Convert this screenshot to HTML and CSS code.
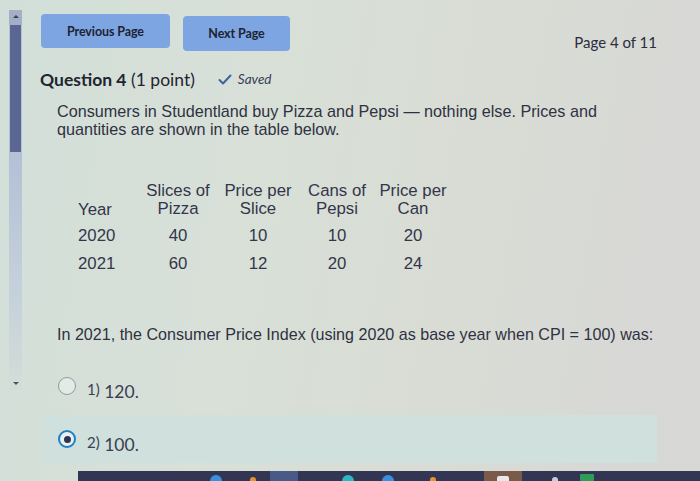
FILE: index.html
```html
<!DOCTYPE html>
<html lang="en">
<head>
<meta charset="utf-8">
<title>Quiz - Question 4</title>
<link rel="stylesheet" href="styles.css">
</head>
<body>
<div class="screen">
  <div class="workspace">
    <div class="scrollbar">
      <div class="sb-up"><span class="tri-up"></span></div>
      <div class="sb-thumb"></div>
      <div class="sb-track"></div>
      <div class="sb-down"><span class="tri-down"></span></div>
    </div>
    <main class="content">
      <div class="topbar">
        <div class="nav">
          <button class="btn">Previous Page</button>
          <button class="btn btn-next">Next Page</button>
        </div>
        <div class="pager">Page 4 of 11</div>
      </div>

      <h2 class="qtitle"><strong>Question 4</strong> <span class="pts">(1 point)</span><span class="saved"><svg class="check" viewBox="0 0 14 11" width="14" height="11"><path d="M1.5 6 L5 9.5 L12.5 1.5" fill="none" stroke="#3d63a0" stroke-width="2" stroke-linecap="round" stroke-linejoin="round"/></svg><em>Saved</em></span></h2>

      <div class="qbody">
        <p class="intro">Consumers in Studentland buy Pizza and Pepsi — nothing else. Prices and quantities are shown in the table below.</p>

        <div class="tbl">
          <div class="th year">Year</div>
          <div class="th">Slices of<br>Pizza</div>
          <div class="th">Price per<br>Slice</div>
          <div class="th">Cans of<br>Pepsi</div>
          <div class="th">Price per<br>Can</div>

          <div class="td year">2020</div>
          <div class="td">40</div>
          <div class="td">10</div>
          <div class="td">10</div>
          <div class="td">20</div>

          <div class="td year">2021</div>
          <div class="td">60</div>
          <div class="td">12</div>
          <div class="td">20</div>
          <div class="td">24</div>
        </div>

        <p class="prompt">In 2021, the Consumer Price Index (using 2020 as base year when CPI = 100) was:</p>
      </div>

      <div class="options">
        <div class="option">
          <span class="radio"></span>
          <span class="label"><span class="num">1)</span> 120.</span>
        </div>
        <div class="option selected">
          <span class="radio on"><span class="dot"></span></span>
          <span class="label"><span class="num">2)</span> 100.</span>
        </div>
      </div>
    </main>
  </div>
  <div class="taskbar">
    <span class="tb-gap w130"></span>
    <span class="tb-ico blue"></span>
    <span class="tb-gap w30"></span>
    <span class="tb-ico orange small"></span>
    <span class="tb-seg"></span>
    <span class="tb-gap w60"></span>
    <span class="tb-ico teal"></span>
    <span class="tb-gap w28"></span>
    <span class="tb-ico blue"></span>
    <span class="tb-gap w36"></span>
    <span class="tb-ico orange small"></span>
    <span class="tb-gap w50"></span>
    <span class="tb-brown"><span class="tb-white"></span></span>
    <span class="tb-gap w24"></span>
    <span class="tb-ico grey small"></span>
    <span class="tb-gap w20"></span>
    <span class="tb-ico green sq"></span>
  </div>
</div>
</body>
</html>
```

FILE: styles.css
```css
* { box-sizing: border-box; }

html, body {
  margin: 0;
  padding: 0;
}

body {
  width: 700px;
  height: 481px;
  overflow: hidden;
  background: linear-gradient(100deg, #d2dfd9 0%, #d8e0d8 35%, #d9dcd5 65%, #d7d7d6 100%);
  font-family: "Liberation Sans", Arial, sans-serif;
  color: #2b2e3c;
}

.screen {
  height: 481px;
  display: flex;
  flex-direction: column;
}

.workspace {
  flex: 1;
  min-height: 0;
  display: flex;
}

/* scrollbar */
.scrollbar {
  width: 13px;
  margin-left: 9px;
  margin-top: 10px;
  height: 380px;
  display: flex;
  flex-direction: column;
  background: #b7c3d4;
  flex-shrink: 0;
}
.sb-up {
  height: 15px;
  background: #a3aec7;
  display: flex;
  justify-content: center;
  padding-top: 5px;
}
.tri-up {
  width: 0; height: 0;
  border-left: 3px solid transparent;
  border-right: 3px solid transparent;
  border-bottom: 3px solid #3a4060;
}
.sb-thumb {
  height: 127px;
  background: #5a6793;
  margin: 0 1px;
}
.sb-track {
  flex: 1;
  background: linear-gradient(#b3c0d6, #c4d0da 60%, #d0dcd8);
}
.sb-down {
  height: 14px;
  display: flex;
  justify-content: center;
  align-items: center;
  background: #d3ddd8;
}
.tri-down {
  width: 0; height: 0;
  border-left: 3px solid transparent;
  border-right: 3px solid transparent;
  border-top: 3px solid #4b5068;
}

/* content */
.content {
  flex: 1;
  padding-left: 18px;
  padding-right: 43px;
}

.topbar {
  display: flex;
  justify-content: space-between;
  align-items: flex-start;
  padding-top: 14px;
  height: 49px;
}
.nav {
  display: flex;
  gap: 13px;
  padding-left: 1px;
}
.btn {
  border: none;
  border-radius: 4px;
  background: #7ca5e2;
  color: #1e2233;
  font-family: Lato, "Liberation Sans", sans-serif;
  font-weight: 700;
  font-size: 12.5px;
  height: 34px;
  width: 129px;
  padding: 0;
  letter-spacing: -0.1px;
}
.btn-next {
  width: 107px;
  margin-top: 2px;
  height: 35px;
}
.pager {
  font-family: Lato, "Liberation Sans", sans-serif;
  font-size: 15px;
  color: #2a2d3e;
  margin-top: 19px;
  line-height: 18px;
}

.qtitle {
  margin: 20px 0 0 0;
  font-family: Lato, "Liberation Sans", sans-serif;
  font-size: 17.5px;
  font-weight: 400;
  line-height: 20px;
  height: 20px;
  color: #22252f;
}
.qtitle strong { font-weight: 700; }
.saved {
  display: inline-flex;
  align-items: center;
  margin-left: 23px;
  gap: 6px;
  font-size: 13.5px;
  color: #363c55;
  vertical-align: 1px;
}
.check { display: block; }

.qbody {
  padding-left: 17px;
}
.intro {
  margin: 13px 0 0 0;
  font-size: 16.2px;
  line-height: 18px;
  width: 560px;
  color: #2f3241;
}

.tbl {
  margin: 44px 0 0 21px;
  display: grid;
  grid-template-columns: 62px 76px 84px 74px 78px;
  font-size: 16.8px;
  color: #33364a;
}
.th {
  line-height: 18px;
  text-align: center;
  display: flex;
  align-items: flex-end;
  justify-content: center;
  padding-bottom: 4px;
  white-space: nowrap;
}
.th.year {
  justify-content: flex-start;
  padding-bottom: 3px;
}
.td {
  line-height: 28px;
  text-align: center;
}
.td.year { text-align: left; }

.prompt {
  margin: 47px 0 0 0;
  font-size: 16.1px;
  line-height: 18px;
  color: #2f3241;
  white-space: nowrap;
}

.options {
  margin-top: 19px;
  display: flex;
  flex-direction: column;
  gap: 5px;
}
.option {
  height: 48px;
  display: flex;
  align-items: center;
  padding-left: 18px;
  font-family: Lato, "Liberation Sans", sans-serif;
  color: #3a3e50;
}
.option.selected {
  background: #cfe0dd;
}
.radio {
  width: 18px;
  height: 18px;
  border-radius: 50%;
  border: 1.5px solid #8e9ca0;
  background: #e2ece6;
  display: flex;
  align-items: center;
  justify-content: center;
  flex-shrink: 0;
}
.radio.on {
  border: 2.5px solid #1d7fc4;
  background: #eaf0f2;
}
.dot {
  width: 7px;
  height: 7px;
  border-radius: 50%;
  background: #2d3450;
}
.label {
  margin-left: 11px;
  margin-top: 12px;
  font-size: 17.5px;
  line-height: 20px;
}
.num {
  font-size: 15px;
  position: relative;
  top: -3px;
}

/* taskbar */
.taskbar {
  margin-left: 78px;
  height: 10px;
  flex-shrink: 0;
  background: #333652;
  display: flex;
  align-items: flex-end;
  overflow: hidden;
}
.tb-gap { flex-shrink: 0; }
.w130 { width: 132px; }
.w30 { width: 28px; }
.w60 { width: 44px; }
.w28 { width: 28px; }
.w36 { width: 36px; }
.w50 { width: 48px; }
.w24 { width: 30px; }
.w20 { width: 22px; }
.tb-ico {
  width: 12px;
  height: 6px;
  border-radius: 6px 6px 0 0;
  flex-shrink: 0;
}
.tb-ico.small { width: 6px; height: 4px; }
.tb-ico.sq { border-radius: 1px; width: 14px; height: 7px; }
.blue { background: #3c8fe0; }
.orange { background: #e4932e; }
.teal { background: #2cb7c9; }
.grey { background: #c9ccd6; }
.green { background: #2f9d5a; }
.tb-seg {
  width: 28px;
  height: 10px;
  margin-left: 14px;
  background: #4a5a86;
  flex-shrink: 0;
}
.tb-brown {
  width: 38px;
  height: 10px;
  background: #7a5a4a;
  display: flex;
  justify-content: center;
  align-items: flex-end;
  flex-shrink: 0;
}
.tb-white {
  width: 12px;
  height: 5px;
  background: #e8e8ea;
  border-radius: 2px 2px 0 0;
}
```
